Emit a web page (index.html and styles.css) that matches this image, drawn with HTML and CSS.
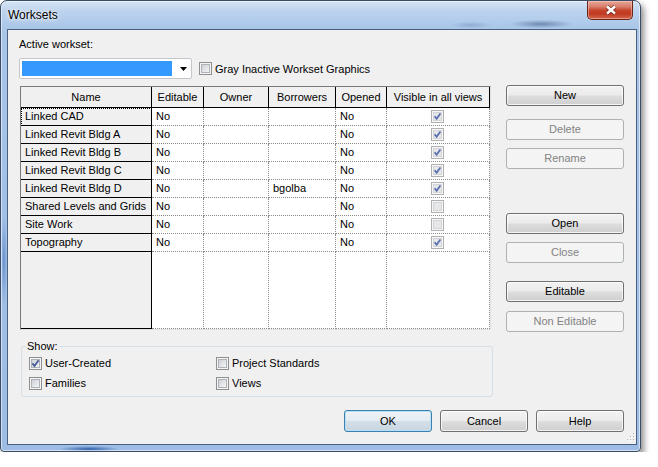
FILE: index.html
```html
<!DOCTYPE html>
<html>
<head>
<meta charset="utf-8">
<title>Worksets</title>
<link rel="stylesheet" href="styles.css">
</head>
<body>
<div class="window">
  <div class="titlebar">
    <span class="title">Worksets</span>
    <button class="close" aria-label="Close">
      <svg width="12" height="10" viewBox="0 0 12 10"><path d="M2 1.5 L10 8.5 M10 1.5 L2 8.5" stroke="#3d120b" stroke-width="4.2" opacity=".55"/><path d="M2 1.5 L10 8.5 M10 1.5 L2 8.5" stroke="#fff" stroke-width="2.4"/></svg>
    </button>
  </div>
  <div class="client">
    <div class="lbl">Active workset:</div>
    <div class="activerow">
      <div class="combo"><span class="combo-sel"></span><svg class="arrow" width="7" height="4" viewBox="0 0 7 4"><path d="M0 0 H7 L3.5 4 Z" fill="#000"/></svg></div>
      <label class="chk gray-chk">
        <svg class="cb" width="13" height="13" viewBox="0 0 13 13"><defs><linearGradient id="cbin" x1="0" y1="0" x2="1" y2="1"><stop offset="0" stop-color="#cbcfd5"/><stop offset="1" stop-color="#f7f7f7"/></linearGradient></defs><rect x=".5" y=".5" width="12" height="12" fill="#f4f4f4" stroke="#8e8f8f"/><rect x="2.5" y="2.5" width="8" height="8" fill="url(#cbin)" stroke="#aeb3b9"/></svg>
        <span>Gray Inactive Workset Graphics</span>
      </label>
    </div>
    <div class="main">
      <div class="gridwrap">
        <div class="grid">
          <div class="h">Name</div><div class="h">Editable</div><div class="h">Owner</div><div class="h">Borrowers</div><div class="h">Opened</div><div class="h">Visible in all views</div>

          <div class="n focus">Linked CAD</div><div class="d">No</div><div class="d"></div><div class="d"></div><div class="d">No</div><div class="d c"><svg class="cb" width="13" height="13" viewBox="0 0 13 13"><rect x=".5" y=".5" width="12" height="12" fill="#f7f7f7" stroke="#b1b1b1"/><rect x="2.5" y="2.5" width="8" height="8" fill="#e6e7e9" stroke="#d2d4d7"/><path d="M3.6 6.3 L5.6 8.8 L9.4 3.4" fill="none" stroke="#5a70b0" stroke-width="1.8"/></svg></div>

          <div class="n">Linked Revit Bldg A</div><div class="d">No</div><div class="d"></div><div class="d"></div><div class="d">No</div><div class="d c"><svg class="cb" width="13" height="13" viewBox="0 0 13 13"><rect x=".5" y=".5" width="12" height="12" fill="#f7f7f7" stroke="#b1b1b1"/><rect x="2.5" y="2.5" width="8" height="8" fill="#e6e7e9" stroke="#d2d4d7"/><path d="M3.6 6.3 L5.6 8.8 L9.4 3.4" fill="none" stroke="#5a70b0" stroke-width="1.8"/></svg></div>

          <div class="n">Linked Revit Bldg B</div><div class="d">No</div><div class="d"></div><div class="d"></div><div class="d">No</div><div class="d c"><svg class="cb" width="13" height="13" viewBox="0 0 13 13"><rect x=".5" y=".5" width="12" height="12" fill="#f7f7f7" stroke="#b1b1b1"/><rect x="2.5" y="2.5" width="8" height="8" fill="#e6e7e9" stroke="#d2d4d7"/><path d="M3.6 6.3 L5.6 8.8 L9.4 3.4" fill="none" stroke="#5a70b0" stroke-width="1.8"/></svg></div>

          <div class="n">Linked Revit Bldg C</div><div class="d">No</div><div class="d"></div><div class="d"></div><div class="d">No</div><div class="d c"><svg class="cb" width="13" height="13" viewBox="0 0 13 13"><rect x=".5" y=".5" width="12" height="12" fill="#f7f7f7" stroke="#b1b1b1"/><rect x="2.5" y="2.5" width="8" height="8" fill="#e6e7e9" stroke="#d2d4d7"/><path d="M3.6 6.3 L5.6 8.8 L9.4 3.4" fill="none" stroke="#5a70b0" stroke-width="1.8"/></svg></div>

          <div class="n">Linked Revit Bldg D</div><div class="d">No</div><div class="d"></div><div class="d">bgolba</div><div class="d">No</div><div class="d c"><svg class="cb" width="13" height="13" viewBox="0 0 13 13"><rect x=".5" y=".5" width="12" height="12" fill="#f7f7f7" stroke="#b1b1b1"/><rect x="2.5" y="2.5" width="8" height="8" fill="#e6e7e9" stroke="#d2d4d7"/><path d="M3.6 6.3 L5.6 8.8 L9.4 3.4" fill="none" stroke="#5a70b0" stroke-width="1.8"/></svg></div>

          <div class="n">Shared Levels and Grids</div><div class="d">No</div><div class="d"></div><div class="d"></div><div class="d">No</div><div class="d c"><svg class="cb" width="13" height="13" viewBox="0 0 13 13"><rect x=".5" y=".5" width="12" height="12" fill="#f7f7f7" stroke="#b1b1b1"/><rect x="2.5" y="2.5" width="8" height="8" fill="#e6e7e9" stroke="#d2d4d7"/></svg></div>

          <div class="n">Site Work</div><div class="d">No</div><div class="d"></div><div class="d"></div><div class="d">No</div><div class="d c"><svg class="cb" width="13" height="13" viewBox="0 0 13 13"><rect x=".5" y=".5" width="12" height="12" fill="#f7f7f7" stroke="#b1b1b1"/><rect x="2.5" y="2.5" width="8" height="8" fill="#e6e7e9" stroke="#d2d4d7"/></svg></div>

          <div class="n">Topography</div><div class="d">No</div><div class="d"></div><div class="d"></div><div class="d">No</div><div class="d c"><svg class="cb" width="13" height="13" viewBox="0 0 13 13"><rect x=".5" y=".5" width="12" height="12" fill="#f7f7f7" stroke="#b1b1b1"/><rect x="2.5" y="2.5" width="8" height="8" fill="#e6e7e9" stroke="#d2d4d7"/><path d="M3.6 6.3 L5.6 8.8 L9.4 3.4" fill="none" stroke="#5a70b0" stroke-width="1.8"/></svg></div>

          <div class="n"></div><div class="d"></div><div class="d"></div><div class="d"></div><div class="d"></div><div class="d"></div>
        </div>
      </div>
      <div class="side">
        <button class="btn">New</button>
        <button class="btn dis g-delete">Delete</button>
        <button class="btn dis g-small">Rename</button>
        <button class="btn g-open">Open</button>
        <button class="btn dis g-small">Close</button>
        <button class="btn g-edit">Editable</button>
        <button class="btn dis g-nonedit">Non Editable</button>
      </div>
    </div>
    <fieldset class="show">
      <legend>Show:</legend>
      <div class="showgrid">
        <label class="chk"><svg class="cb" width="13" height="13" viewBox="0 0 13 13"><rect x=".5" y=".5" width="12" height="12" fill="#f4f4f4" stroke="#8e8f8f"/><rect x="2.5" y="2.5" width="8" height="8" fill="url(#cbin)" stroke="#aeb3b9"/><path d="M3.4 6.4 L5.5 9 L9.6 3.2" fill="none" stroke="#4b5e96" stroke-width="1.9"/></svg><span>User-Created</span></label>
        <label class="chk"><svg class="cb" width="13" height="13" viewBox="0 0 13 13"><rect x=".5" y=".5" width="12" height="12" fill="#f4f4f4" stroke="#8e8f8f"/><rect x="2.5" y="2.5" width="8" height="8" fill="url(#cbin)" stroke="#aeb3b9"/></svg><span>Project Standards</span></label>
        <label class="chk"><svg class="cb" width="13" height="13" viewBox="0 0 13 13"><rect x=".5" y=".5" width="12" height="12" fill="#f4f4f4" stroke="#8e8f8f"/><rect x="2.5" y="2.5" width="8" height="8" fill="url(#cbin)" stroke="#aeb3b9"/></svg><span>Families</span></label>
        <label class="chk"><svg class="cb" width="13" height="13" viewBox="0 0 13 13"><rect x=".5" y=".5" width="12" height="12" fill="#f4f4f4" stroke="#8e8f8f"/><rect x="2.5" y="2.5" width="8" height="8" fill="url(#cbin)" stroke="#aeb3b9"/></svg><span>Views</span></label>
      </div>
    </fieldset>
    <div class="footer">
      <button class="btn fbtn default">OK</button>
      <button class="btn fbtn">Cancel</button>
      <button class="btn fbtn">Help</button>
    </div>
    <svg class="grip" width="10" height="10" viewBox="0 0 10 10">
      <g fill="#fff"><rect x="9" y="1" width="1" height="1"/><rect x="6" y="4" width="1" height="1"/><rect x="9" y="4" width="1" height="1"/><rect x="3" y="7" width="1" height="1"/><rect x="6" y="7" width="1" height="1"/><rect x="9" y="7" width="1" height="1"/></g>
      <g fill="#b4b8bd"><rect x="8" y="0" width="1" height="1"/><rect x="5" y="3" width="1" height="1"/><rect x="8" y="3" width="1" height="1"/><rect x="2" y="6" width="1" height="1"/><rect x="5" y="6" width="1" height="1"/><rect x="8" y="6" width="1" height="1"/></g>
    </svg>
  </div>
</div>
</body>
</html>
```
FILE: styles.css
```css
html, body {
  margin: 0;
  padding: 0;
  background: #ffffff;
}
body {
  font-family: "Liberation Sans", Arial, sans-serif;
  font-size: 11px;
  color: #000;
}
button {
  font-family: inherit;
  font-size: 11px;
  color: #000;
  padding: 0;
  margin: 0;
}

.window {
  width: 641px;
  height: 452px;
  box-sizing: border-box;
  border: 1px solid #3b4c66;
  border-radius: 7px 7px 4px 4px;
  padding: 0 3px 6px 6px;
  display: flex;
  flex-direction: column;
  background:
    radial-gradient(ellipse 45px 6px at 540px 23px, rgba(35,60,110,.45), transparent 70%),
    radial-gradient(ellipse 30px 5px at 470px 24px, rgba(60,90,140,.25), transparent 70%),
    radial-gradient(ellipse 40px 4px at 88px 448px, rgba(30,80,160,.85), transparent 75%),
    radial-gradient(ellipse 4px 60px at 3px 260px, rgba(50,100,180,.5), transparent 75%),
    linear-gradient(180deg, #d6e4f4 0px, #bcd3ee 10px, #a9c5e8 28px, #a2c0e6 200px, #9dbde5 100%);
  box-shadow: 3px 4px 6px rgba(0,0,0,.45), inset 0 0 0 1px rgba(255,255,255,.55);
}

.titlebar {
  height: 28px;
  flex: none;
  display: flex;
  align-items: flex-start;
}
.title {
  margin-left: 1px;
  font-size: 12px;
  line-height: 28px;
  color: #000;
  text-shadow: 0 0 6px rgba(255,255,255,.95), 0 0 3px rgba(255,255,255,.9);
}
.close {
  margin-left: auto;
  margin-right: 4px;
  width: 46px;
  height: 19px;
  box-sizing: border-box;
  border: 1px solid #6a2418;
  border-top: none;
  border-radius: 0 0 5px 5px;
  background: linear-gradient(180deg, #e6a698 0%, #d9816f 30%, #c8452c 52%, #be3a20 70%, #d4654a 100%);
  box-shadow: inset 0 0 0 1px rgba(255,220,210,.45);
  display: flex;
  align-items: center;
  justify-content: center;
}
.close svg { display: block; margin-left: 2px; }

.client {
  flex: 1;
  position: relative;
  background: #f0f0f0;
  border: 1px solid #4b6080;
  padding: 7px 12px 0 11px;
  display: flex;
  flex-direction: column;
}

.lbl {
  line-height: 14px;
  height: 14px;
}

.activerow {
  margin-top: 7px;
  height: 21px;
  display: flex;
  align-items: center;
}
.combo {
  width: 173px;
  height: 21px;
  box-sizing: border-box;
  border: 1px solid #c3c6cb;
  border-radius: 2px;
  background: #fff;
  padding: 2px 0 2px 2px;
  display: flex;
  align-items: center;
}
.combo-sel {
  width: 150px;
  height: 15px;
  background: #3399ff;
}
.arrow {
  display: block;
  margin-left: 8px;
}

.chk {
  display: flex;
  align-items: center;
  white-space: nowrap;
}
.chk .cb {
  display: block;
  flex: none;
  margin-right: 3px;
}
.gray-chk {
  margin-left: 7px;
}

.main {
  margin-top: 6px;
  height: 245px;
  display: flex;
  align-items: flex-start;
}
.gridwrap {
  margin: 1px 0 0 1px;
  border: 1px solid;
  border-color: #7a7a7a #e2e2e2 #e2e2e2 #7a7a7a;
  background: #fff;
}
.grid {
  display: grid;
  grid-template-columns: 131px 52px 65px 67px 51px 103px;
  grid-template-rows: 21px repeat(8, 18px) 77px;
}
.grid > div {
  box-sizing: border-box;
  white-space: nowrap;
  overflow: hidden;
}
.h {
  background: #f0f0f0;
  border-right: 1px solid #000;
  border-bottom: 1px solid #000;
  text-align: center;
  line-height: 20px;
}
.h:last-child { border-right-color: #a0a0a0; }
.n {
  background: #f0f0f0;
  border-right: 1px solid #000;
  border-bottom: 1px solid #000;
  padding-left: 4px;
  line-height: 16px;
}
.n.focus {
  outline: 1px dotted #000;
  outline-offset: -1px;
}
.d {
  background: #fff;
  border-right: 1px dotted #8a8a8a;
  border-bottom: 1px dotted #8a8a8a;
  padding-left: 4px;
  line-height: 16px;
}
.d.c {
  padding: 0;
  display: flex;
  justify-content: center;
  align-items: center;
}
.d.c .cb { display: block; margin-left: -1px; }

.side {
  margin-left: auto;
  width: 118px;
  display: flex;
  flex-direction: column;
}
.btn {
  width: 118px;
  height: 21px;
  box-sizing: border-box;
  border: 1px solid #707070;
  border-radius: 3px;
  background: linear-gradient(180deg, #f2f2f2 0%, #ebebeb 48%, #dddddd 52%, #cfcfcf 100%);
  box-shadow: inset 0 0 0 1px rgba(255,255,255,.75);
  text-align: center;
  line-height: 19px;
}
.btn.dis {
  border-color: #adb2b5;
  background: #f4f4f4;
  box-shadow: none;
  color: #838383;
}
.g-delete { margin-top: 13px; }
.g-small { margin-top: 8px; }
.g-open { margin-top: 44px; }
.g-edit { margin-top: 18px; }
.g-nonedit { margin-top: 9px; }

.show {
  margin: 9px 0 0 2px;
  padding: 0 0 3px 7px;
  width: 472px;
  box-sizing: border-box;
  min-width: 0;
  border: 1px solid #d5dfe5;
  border-radius: 3px;
}
.show legend {
  padding: 0 1px;
  margin-left: -3px;
  line-height: 14px;
}
.showgrid {
  display: grid;
  grid-template-columns: 187px auto;
  grid-auto-rows: 20px;
  align-items: center;
}

.footer {
  margin-top: 13px;
  display: flex;
  justify-content: flex-end;
  gap: 8px;
}
.fbtn {
  width: 88px;
  height: 22px;
  line-height: 20px;
}
.fbtn.default {
  border-color: #3c7fb1;
  background: linear-gradient(180deg, #eef3f7 0%, #e4ecf2 48%, #d3dfe8 52%, #c8d6e1 100%);
  box-shadow: inset 0 0 0 1px #b9dff5;
}

.grip {
  position: absolute;
  right: 1px;
  bottom: 1px;
  display: block;
}
```
